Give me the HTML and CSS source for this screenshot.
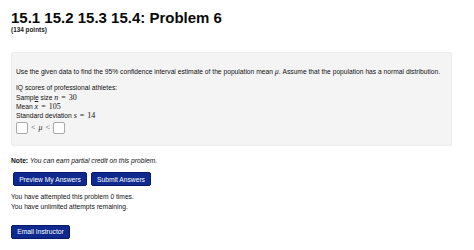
FILE: index.html
```html
<!DOCTYPE html>
<html>
<head>
<meta charset="utf-8">
<link rel="stylesheet" href="styles.css">
</head>
<body>
<div class="page">
  <h1 class="title">15.1 15.2 15.3 15.4: Problem 6</h1>
  <div class="points">(134 points)</div>
  <div class="problem">
    <p class="lead">Use the given data to find the 95% confidence interval estimate of the population mean <span class="m i">μ</span>. Assume that the population has a normal distribution.</p>
    <div class="data">
      <div>IQ scores of professional athletes:</div>
      <div>Sample size <span class="m"><span class="i">n</span><span class="op">=</span>30</span></div>
      <div>Mean <span class="m"><span class="i ovl">x</span><span class="op">=</span>105</span></div>
      <div>Standard deviation <span class="m"><span class="i">s</span><span class="op">=</span>14</span></div>
      <div class="ineq"><span class="box"></span><span class="m rel">&lt;<span class="i mu">μ</span>&lt;</span><span class="box"></span></div>
    </div>
  </div>
  <p class="note"><b>Note:</b> <i>You can earn partial credit on this problem.</i></p>
  <div class="actions">
    <span class="btn btn-preview">Preview My Answers</span>
    <span class="btn btn-submit">Submit Answers</span>
  </div>
  <div class="attempts">
    <div>You have attempted this problem 0 times.</div>
    <div>You have unlimited attempts remaining.</div>
  </div>
  <span class="btn btn-email">Email Instructor</span>
</div>
</body>
</html>
```

FILE: styles.css
```css
html, body {
  margin: 0;
  padding: 0;
  background: #ffffff;
}
body {
  font-family: "Liberation Sans", Arial, Helvetica, sans-serif;
  font-size: 6.7px;
  line-height: 9.3px;
  color: #111;
}
.page {
  padding-left: 11px;
  width: 441px;
}
.title {
  margin: 9px 0 0 0;
  font-size: 15px;
  line-height: 17px;
  font-weight: bold;
  color: #0a0a0a;
}
.points {
  font-size: 6.4px;
  line-height: 7px;
  font-weight: bold;
  color: #222;
}
.problem {
  margin-top: 19px;
  background: #f4f4f4;
  border: 1px solid #ececec;
  border-radius: 2px;
  padding: 14px 2px 12px 4px;
  height: 66px;
}
.lead {
  margin: 0;
  white-space: nowrap;
}
.data {
  margin-top: 7px;
}
.m {
  font-family: "Liberation Serif", "Times New Roman", serif;
  font-size: 8px;
}
.i {
  font-style: italic;
}
.op {
  padding: 0 3px;
  color: #333;
}
.ovl {
  text-decoration: overline;
}
.ineq {
  display: flex;
  align-items: center;
  gap: 3px;
  margin-top: 2px;
  height: 11px;
}
.box {
  display: inline-block;
  width: 10px;
  height: 10px;
  background: #fff;
  border: 1px solid #a8a8a8;
  border-radius: 2px;
  box-sizing: content-box;
}
.rel {
  color: #555;
}
.mu {
  padding: 0 3px;
  color: #333;
}
.note {
  margin: 10px 0 0 0;
}
.actions {
  display: flex;
  gap: 4px;
  margin-top: 7px;
  padding-left: 2px;
}
.btn {
  display: inline-flex;
  align-items: center;
  justify-content: center;
  height: 14px;
  box-sizing: border-box;
  background: #0e2a8e;
  border: 1px solid #061a66;
  border-radius: 2px;
  color: #ffffff;
  font-size: 6.7px;
}
.btn-preview { width: 74px; }
.btn-submit { width: 60px; }
.attempts {
  margin-top: 6px;
}
.btn-email {
  margin-top: 14px;
  width: 59px;
}
```
